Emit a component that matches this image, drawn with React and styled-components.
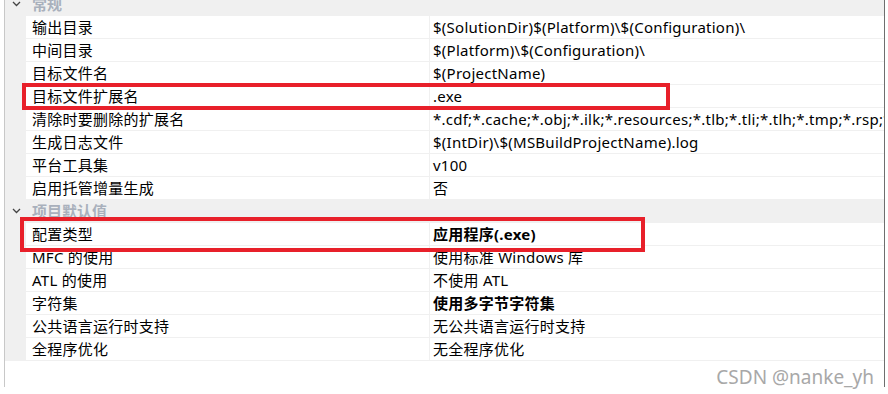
import React from 'react';
import styled, { createGlobalStyle } from 'styled-components';

const GlobalStyle = createGlobalStyle`
  html, body {
    margin: 0;
    padding: 0;
    background: #ffffff;
  }
  body {
    font-family: "Noto Sans", "Noto Sans CJK SC", sans-serif;
  }
`;

const Window = styled.div`
  position: relative;
  width: 888px;
  height: 394px;
  overflow: hidden;
  background: #ffffff;
  padding-left: 4px;
  box-sizing: border-box;
`;

const Panel = styled.div`
  width: 879px;
  height: 100%;
  border-left: 1px solid #c8c8c8;
  border-right: 1px solid #6e6e6e;
  box-sizing: content-box;
`;

/* the grid is scrolled a few px so the first group header is cut */
const Grid = styled.div`
  margin-top: -7px;
  display: flex;
  flex-direction: column;
`;

const GroupRow = styled.div`
  display: grid;
  grid-template-columns: 21px 1fr;
  height: 23px;
  align-items: center;
  background: #f0f0f0;
`;

const Chevron = styled.svg`
  width: 9px;
  height: 6px;
  margin-left: 7px;
  margin-top: -2px;
`;

const GroupTitle = styled.div`
  padding-left: 6px;
  font-size: 15px;
  font-weight: 700;
  color: #a9b0bc;
  line-height: 23px;
`;

const Row = styled.div`
  display: grid;
  grid-template-columns: 21px 403px 1fr;
  height: 23px;
`;

const Gutter = styled.div`
  background: #f0f0f0;
`;

const Cell = styled.div`
  font-size: 15px;
  line-height: 22px;
  letter-spacing: 0.25px;
  color: #000000;
  border-bottom: 1px solid #f0f0f0;
  white-space: nowrap;
  overflow: hidden;
  font-weight: ${(p) => (p.$bold ? 700 : 400)};
  padding-left: ${(p) => (p.$value ? '3px' : '6px')};
  border-left: ${(p) => (p.$value ? '1px solid #f0f0f0' : 'none')};
`;

const Highlight = styled.div`
  position: absolute;
  border: 4px solid #e8202a;
  box-sizing: border-box;
  pointer-events: none;
`;

const Watermark = styled.div`
  position: absolute;
  right: 14px;
  bottom: 4px;
  font-family: "Noto Sans", sans-serif;
  font-size: 19px;
  color: #a8a8a8;
`;

const groups = [
  {
    title: '常规',
    rows: [
      ['输出目录', '$(SolutionDir)$(Platform)\\$(Configuration)\\'],
      ['中间目录', '$(Platform)\\$(Configuration)\\'],
      ['目标文件名', '$(ProjectName)'],
      ['目标文件扩展名', '.exe'],
      ['清除时要删除的扩展名', '*.cdf;*.cache;*.obj;*.ilk;*.resources;*.tlb;*.tli;*.tlh;*.tmp;*.rsp;*.pgc;*.pgd;*.meta'],
      ['生成日志文件', '$(IntDir)\\$(MSBuildProjectName).log'],
      ['平台工具集', 'v100'],
      ['启用托管增量生成', '否'],
    ],
  },
  {
    title: '项目默认值',
    rows: [
      ['配置类型', '应用程序(.exe)', true],
      ['MFC 的使用', '使用标准 Windows 库'],
      ['ATL 的使用', '不使用 ATL'],
      ['字符集', '使用多字节字符集', true],
      ['公共语言运行时支持', '无公共语言运行时支持'],
      ['全程序优化', '无全程序优化'],
    ],
  },
];

const App = () => (
  <>
    <GlobalStyle />
    <Window>
      <Panel>
        <Grid>
          {groups.map((g) => (
            <React.Fragment key={g.title}>
              <GroupRow>
                <Chevron viewBox="0 0 9 6">
                  <path d="M1 1 L4.5 4.5 L8 1" fill="none" stroke="#444" strokeWidth="1.3" />
                </Chevron>
                <GroupTitle>{g.title}</GroupTitle>
              </GroupRow>
              {g.rows.map(([name, value, bold]) => (
                <Row key={name}>
                  <Gutter />
                  <Cell>{name}</Cell>
                  <Cell $value $bold={bold}>{value}</Cell>
                </Row>
              ))}
            </React.Fragment>
          ))}
        </Grid>
      </Panel>
      <Highlight style={{ left: 22, top: 83, width: 648, height: 27 }} />
      <Highlight style={{ left: 20, top: 217, width: 625, height: 35 }} />
      <Watermark>CSDN @nanke_yh</Watermark>
    </Window>
  </>
);

export default App;
